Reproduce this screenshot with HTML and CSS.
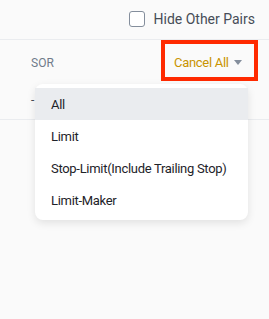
FILE: index.html
```html
<!DOCTYPE html>
<html>
<head>
<meta charset="utf-8">
<link rel="stylesheet" href="styles.css">
</head>
<body>
<div class="page">
  <div class="topbar">
    <label class="check"><span class="box"></span><span class="check-label">Hide Other Pairs</span></label>
  </div>
  <div class="header-row">
    <span class="col-sor">SOR</span>
    <div class="cancel-wrap">
      <span class="cancel">Cancel All</span>
      <svg class="caret" width="8" height="5" viewBox="0 0 8 5"><path d="M0 0h8L4 5z" fill="#848e9c"/></svg>
    </div>
  </div>
  <div class="data-row">
    <span class="dash">-</span>
  </div>
  <ul class="menu">
    <li class="item active">All</li>
    <li class="item">Limit</li>
    <li class="item">Stop-Limit(Include Trailing Stop)</li>
    <li class="item">Limit-Maker</li>
  </ul>
</div>
</body>
</html>
```
FILE: styles.css
```css
html, body { margin: 0; padding: 0; }
body {
  background: #fafafa;
  font-family: Roboto, "Noto Sans", sans-serif;
  color: #1e2329;
  width: 269px;
  height: 319px;
  overflow: hidden;
  white-space: nowrap;
}
.page { position: relative; height: 319px; }
.topbar {
  height: 39px;
  border-bottom: 1px solid #eaecef;
  display: flex;
  justify-content: flex-end;
  align-items: center;
}
.check { display: flex; align-items: center; gap: 9px; margin-right: 14px; margin-top: -1px; }
.box {
  width: 14px; height: 14px;
  border: 1px solid #848e9c;
  border-radius: 3px;
  background: #fff;
}
.check-label { font-size: 14px; color: #474d57; }
.header-row {
  height: 41px;
  display: flex;
  align-items: center;
  justify-content: space-between;
  padding-left: 31px;
}
.col-sor { font-size: 12px; color: #707a8a; padding-top: 4px; }
.cancel-wrap {
  display: flex;
  align-items: center;
  gap: 5px;
  width: 97px;
  height: 41px;
  box-sizing: border-box;
  border: 4px solid #ff2a00;
  padding-left: 9px;
  padding-top: 4px;
  margin-right: 11px;
}
.cancel { font-size: 13px; color: #c99400; letter-spacing: -0.3px; }
.data-row {
  height: 38px;
  border-bottom: 1px solid #eaecef;
  display: flex;
  align-items: center;
  padding-left: 31px;
}
.dash { font-size: 12px; color: #474d57; }
.menu {
  position: absolute;
  left: 35px;
  top: 84px;
  width: 213px;
  margin: 0;
  padding: 4px 0;
  list-style: none;
  background: #fff;
  border-radius: 8px;
  box-shadow: 0 3px 8px rgba(0,0,0,0.10);
}
.item {
  height: 32px;
  line-height: 33px;
  padding-left: 16px;
  font-size: 13px;
  letter-spacing: -0.3px;
  color: #1e2329;
}
.item.active { background: #eaecef; }
```
